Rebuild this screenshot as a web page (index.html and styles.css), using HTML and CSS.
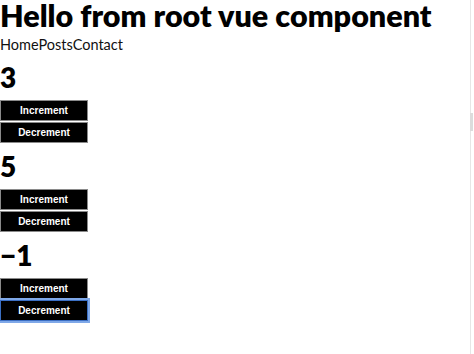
FILE: index.html
```
<!DOCTYPE html>
<html>
<head>
<meta charset="utf-8">
<link rel="stylesheet" href="styles.css">
</head>
<body>
<div class="page">
  <h1 class="title">Hello from root vue component</h1>
  <nav class="nav"><a>Home</a><a>Posts</a><a>Contact</a></nav>
  <div class="counter">
    <h2 class="count">3</h2>
    <button class="btn">Increment</button>
    <button class="btn">Decrement</button>
  </div>
  <div class="counter">
    <h2 class="count">5</h2>
    <button class="btn">Increment</button>
    <button class="btn">Decrement</button>
  </div>
  <div class="counter">
    <h2 class="count">−1</h2>
    <button class="btn">Increment</button>
    <button class="btn focused">Decrement</button>
  </div>
  <div class="thumb"></div>
</div>
</body>
</html>
```
FILE: styles.css
```
html, body {
  margin: 0;
  padding: 0;
  background: #fff;
}
.page {
  position: relative;
  width: 470px;
  height: 354px;
  border-right: 1px solid #e6e6e6;
  font-family: Lato, "Noto Sans", sans-serif;
  color: #000;
}
.title {
  margin: 0;
  font-size: 30.5px;
  line-height: 30px;
  font-weight: 800;
  white-space: nowrap;
}
.nav {
  padding-top: 5px;
  font-size: 14.5px;
  line-height: 20px;
  color: #111;
}
.count {
  margin: 0;
  font-size: 28px;
  line-height: 45px;
  font-weight: 800;
}
.btn {
  display: block;
  width: 88px;
  height: 21px;
  margin: 0 0 1px 0;
  padding: 0;
  background: #000;
  color: #fff;
  border: 1px solid #8a8a8a;
  font-family: "Liberation Sans", Arial, sans-serif;
  font-weight: bold;
  font-size: 10px;
}
.focused {
  box-shadow: 0 0 0 2px #7fa8e8;
  border-color: #3b6fc4;
}
.thumb {
  position: absolute;
  right: -3px;
  top: 113px;
  width: 3px;
  height: 18px;
  background: #dcdcdc;
}
```
